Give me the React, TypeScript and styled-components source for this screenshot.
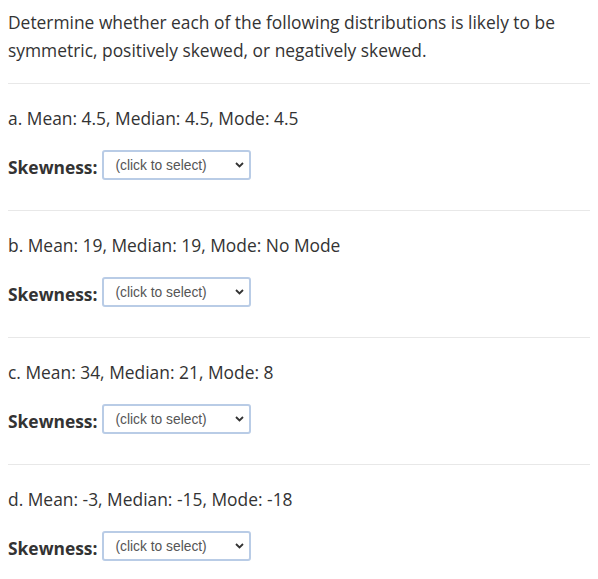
import React from 'react';
import styled, { createGlobalStyle } from 'styled-components';

const GlobalStyle = createGlobalStyle`
  body {
    margin: 8px;
    background: #fff;
    font-family: 'Open Sans', 'Liberation Sans', sans-serif;
    color: #333;
  }
`;

const Page = styled.div`
  width: 588px;
`;

const Intro = styled.p`
  margin: 0;
  padding-bottom: 19px;
  border-bottom: 1px solid #e8e8e8;
  font-size: 17.4px;
  line-height: 28px;
`;

const Question = styled.section<{ last?: boolean }>`
  padding: 20px 0 ${p => (p.last ? '10px' : '30px')};
  border-bottom: ${p => (p.last ? 'none' : '1px solid #e8e8e8')};
`;

const Stats = styled.div`
  font-size: 17.4px;
  line-height: 28px;
`;

const AnswerRow = styled.div`
  display: flex;
  align-items: center;
  gap: 5px;
  margin-top: 18px;
`;

const Label = styled.span`
  font-weight: 700;
  font-size: 17.4px;
  line-height: 20px;
  padding-top: 4px;
`;

const SelectWrap = styled.div`
  position: relative;
  width: 149px;
  height: 30px;
`;

const Select = styled.select`
  appearance: none;
  width: 100%;
  height: 100%;
  box-sizing: border-box;
  border: 2px solid #b9cce6;
  border-radius: 3px;
  background: #fff;
  padding: 0 0 0 11px;
  font-family: 'Liberation Sans', Arial, sans-serif;
  font-size: 13.8px;
  color: #555;
  outline: none;
`;

const Chevron = styled.svg`
  position: absolute;
  right: 7px;
  top: 12px;
  pointer-events: none;
`;

const items = [
  'a. Mean: 4.5, Median: 4.5, Mode: 4.5',
  'b. Mean: 19, Median: 19, Mode: No Mode',
  'c. Mean: 34, Median: 21, Mode: 8',
  'd. Mean: -3, Median: -15, Mode: -18',
];

function App() {
  return (
    <Page>
      <GlobalStyle />
      <Intro>
        Determine whether each of the following distributions is likely to be symmetric, positively skewed, or negatively
        skewed.
      </Intro>
      {items.map((text, i) => (
        <Question key={text} last={i === items.length - 1}>
          <Stats>{text}</Stats>
          <AnswerRow>
            <Label>Skewness:</Label>
            <SelectWrap>
              <Select defaultValue="">
                <option value="">(click to select)</option>
                <option value="symmetric">Symmetric</option>
                <option value="positive">Positively skewed</option>
                <option value="negative">Negatively skewed</option>
              </Select>
              <Chevron width="9" height="6" viewBox="0 0 9 6">
                <path d="M1 1l3.5 3.5L8 1" fill="none" stroke="#333" strokeWidth="1.8" />
              </Chevron>
            </SelectWrap>
          </AnswerRow>
        </Question>
      ))}
    </Page>
  );
}

export default App;
